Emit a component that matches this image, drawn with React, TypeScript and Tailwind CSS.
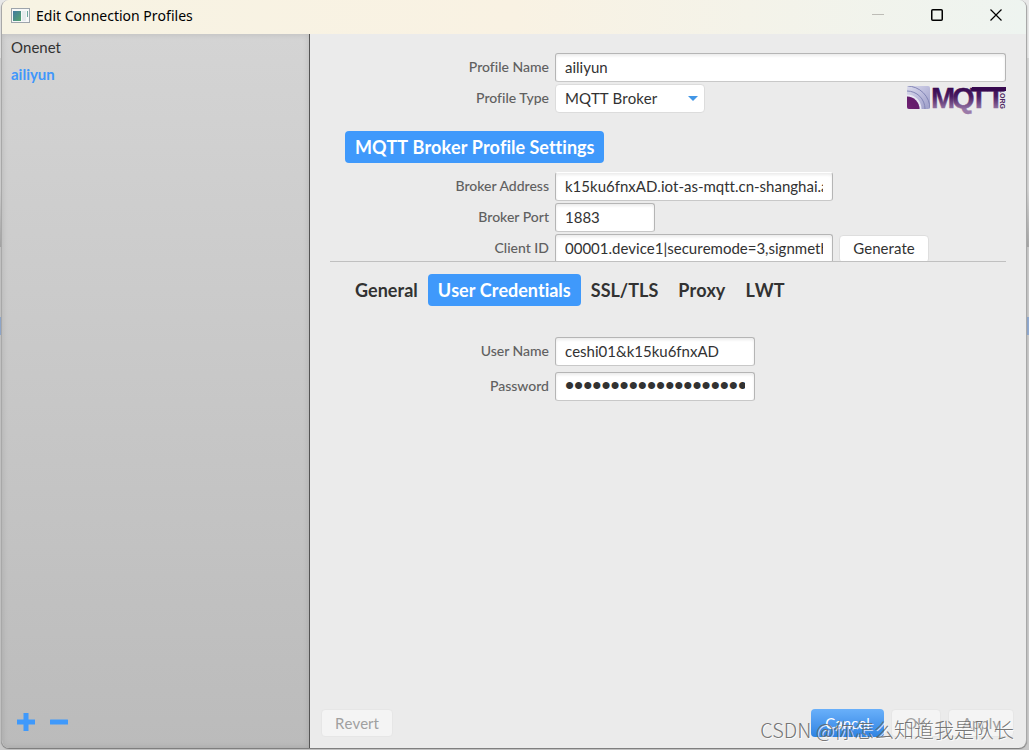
import { ReactNode } from "react"

const tabs = ["General", "User Credentials", "SSL/TLS", "Proxy", "LWT"]

const inputClass =
    "block h-[29px] rounded-[3px] border border-[#b5b5b5] border-b-[#c8c8c8] bg-white px-[9px] pb-0.5 text-[#323232] shadow-[inset_0_2px_3px_rgba(0,0,0,0.08)] outline-none"

const buttonClass = "h-7 rounded border text-[15px]"

const disabledClass = "border-[#e6e6e6] bg-[#f4f4f4] text-[#a0a0a0]"

const tabClass = "h-8 rounded px-2.5 text-[18px] font-bold"

interface FieldProps {
    id: string
    label: string
    children: ReactNode
}

function Field({ id, label, children }: Readonly<FieldProps>) {
    return (
        <div className="flex items-center gap-1.5">
            <label
                htmlFor={id}
                className="w-[219px] shrink-0 pb-0.5 text-right text-[14px] font-medium text-[#606060] [font-kerning:normal]">
                {label}
            </label>
            {children}
        </div>
    )
}

function AppIcon() {
    return (
        <svg width="19" height="15" viewBox="0 0 19 15" aria-hidden="true">
            <defs>
                <linearGradient id="pane" x1="0" y1="0" x2="1" y2="1">
                    <stop offset="0" stopColor="#4279a0" />
                    <stop offset="1" stopColor="#55a56c" />
                </linearGradient>
            </defs>
            <rect x="0.5" y="0.5" width="18" height="14" fill="#f7f8f8" stroke="#9da4ab" />
            <rect x="2" y="3" width="8" height="10" fill="url(#pane)" />
            <rect x="11" y="3" width="4" height="10" fill="#e6eaed" />
            <rect x="16" y="3" width="1" height="6" fill="#6fa8a0" />
        </svg>
    )
}

function MqttLogo() {
    return (
        <svg className="overflow-visible" width="100" height="26" viewBox="0 0 100 26" role="img" aria-label="MQTT.org">
            <defs>
                <linearGradient id="letters" gradientUnits="userSpaceOnUse" x1="0" y1="1" x2="0" y2="24">
                    <stop offset="0" stopColor="#37094f" />
                    <stop offset="0.4" stopColor="#481b61" />
                    <stop offset="1" stopColor="#9a7aa9" />
                </linearGradient>
                <linearGradient id="waves" x1="0" y1="0" x2="1" y2="1">
                    <stop offset="0" stopColor="#dcdcec" />
                    <stop offset="0.5" stopColor="#bcbcdc" />
                    <stop offset="1" stopColor="#9c9dc8" />
                </linearGradient>
                <radialGradient id="core" cx="0" cy="1" r="1">
                    <stop offset="0" stopColor="#92308a" />
                    <stop offset="1" stopColor="#661d6c" />
                </radialGradient>
                <clipPath id="badge">
                    <rect x="1" y="0" width="23" height="23" rx="2" />
                </clipPath>
            </defs>
            <g clipPath="url(#badge)">
                <rect x="1" y="0" width="23" height="23" fill="url(#waves)" />
                <circle cx="1" cy="23" r="23" fill="none" stroke="#8285b5" strokeWidth="1" />
                <circle cx="1" cy="23" r="18" fill="none" stroke="#8285b5" strokeWidth="1" />
                <circle cx="1" cy="23" r="13.5" fill="none" stroke="#e8e8f3" strokeWidth="2" />
                <circle cx="1" cy="23" r="12.5" fill="url(#core)" />
            </g>
            <text
                x="25 46 64 81"
                y="22"
                fill="url(#letters)"
                stroke="url(#letters)"
                strokeWidth="0.4"
                fontFamily="Liberation Sans, sans-serif"
                fontWeight="700"
                fontSize="29">
                MQTT
            </text>
            <rect x="66" y="1" width="34" height="4" fill="#37094f" />
            <text
                transform="translate(94 5) rotate(90)"
                fill="#4b2563"
                fontFamily="Liberation Sans, sans-serif"
                fontWeight="700"
                fontSize="7">
                .ORG
            </text>
        </svg>
    )
}

function TitleBar() {
    return (
        <header className="flex h-[34px] shrink-0 items-center bg-linear-to-r from-[#f7f3e3] via-[#f9f2e3] to-[#eef4f0] pr-6 pb-1 pl-[9px]">
            <AppIcon />
            <h1 className="ml-1.5 flex-1 font-['Noto_Sans',sans-serif] text-[14px] text-black">
                Edit Connection Profiles
            </h1>
            <div className="flex items-center gap-[47px]">
                <button type="button" aria-label="Minimize" disabled>
                    <svg width="12" height="12" viewBox="0 0 12 12">
                        <path d="M0 5.5h12" stroke="#bdbcb6" />
                    </svg>
                </button>
                <button type="button" aria-label="Maximize">
                    <svg width="12" height="12" viewBox="0 0 12 12">
                        <rect x="0.75" y="0.75" width="10.5" height="10.5" rx="1" fill="none" stroke="#000" strokeWidth="1.5" />
                    </svg>
                </button>
                <button type="button" aria-label="Close">
                    <svg width="12" height="12" viewBox="0 0 12 12">
                        <path d="M0.5 0.5l11 11M11.5 0.5l-11 11" stroke="#000" strokeWidth="1.2" />
                    </svg>
                </button>
            </div>
        </header>
    )
}

function Sidebar() {
    return (
        <aside className="flex w-[308px] shrink-0 flex-col border-r border-[#555] bg-linear-to-b from-[#d4d4d4] to-[#bbb] shadow-[inset_0_0_6px_rgba(0,0,0,0.12)]">
            <ul className="flex-1 text-[15px] leading-[27px]">
                <li>
                    <button type="button" className="w-full px-[9px] text-left text-[#323232]">
                        Onenet
                    </button>
                </li>
                <li>
                    <button type="button" className="w-full px-[9px] text-left font-bold text-[#3f97fb]">
                        ailiyun
                    </button>
                </li>
            </ul>
            <div className="flex gap-[15px] px-[15px] pb-[17px]">
                <button type="button" aria-label="Add profile">
                    <svg width="18" height="18" viewBox="0 0 18 18" fill="#3f99fb">
                        <path d="M6.5 0h5v6.5H18v5h-6.5V18h-5v-6.5H0v-5h6.5z" />
                    </svg>
                </button>
                <button type="button" aria-label="Remove profile">
                    <svg width="18" height="18" viewBox="0 0 18 18" fill="#3f99fb">
                        <rect y="6.5" width="18" height="5" rx="0.5" />
                    </svg>
                </button>
            </div>
        </aside>
    )
}

function ProfileForm() {
    return (
        <form className="flex flex-1 flex-col px-5 pt-[19px]">
            <div className="flex flex-col gap-0.5">
                <Field id="profile-name" label="Profile Name">
                    <input id="profile-name" className={`${inputClass} min-w-0 flex-1 text-[15px]`} defaultValue="ailiyun" />
                </Field>
                <div className="flex items-center justify-between">
                    <Field id="profile-type" label="Profile Type">
                        <div className="relative">
                            <select
                                id="profile-type"
                                className="block h-[29px] w-[150px] appearance-none rounded border border-[#dcdcdc] bg-white px-[9px] text-[15px] text-[#323232]">
                                <option>MQTT Broker</option>
                            </select>
                            <svg className="pointer-events-none absolute top-3 right-[7px]" width="10" height="5" viewBox="0 0 10 5">
                                <path d="M0 0h10L5 5z" fill="#4296e6" />
                            </svg>
                        </div>
                    </Field>
                    <MqttLogo />
                </div>
            </div>

            <div className="mt-[18px] px-[15px]">
                <button type="button" className={`${tabClass} bg-[#3f99fb] text-white`}>
                    MQTT Broker Profile Settings
                </button>
            </div>

            <section className="mt-[9px] flex h-[90px] flex-col gap-0.5 overflow-hidden border-b border-[#c0c0c0]">
                <Field id="broker-address" label="Broker Address">
                    <input
                        id="broker-address"
                        className={`${inputClass} w-[278px] border-t-white text-[15px]`}
                        defaultValue="k15ku6fnxAD.iot-as-mqtt.cn-shanghai.aliyuncs.com"
                    />
                </Field>
                <Field id="broker-port" label="Broker Port">
                    <input id="broker-port" className={`${inputClass} w-[100px] text-[15px]`} defaultValue="1883" />
                </Field>
                <Field id="client-id" label="Client ID">
                    <input
                        id="client-id"
                        className={`${inputClass} w-[278px] text-[15px]`}
                        defaultValue="00001.device1|securemode=3,signmethod=hmacsha1|"
                    />
                    <button type="button" className={`${buttonClass} w-[90px] border-[#dedede] bg-white text-[#323232]`}>
                        Generate
                    </button>
                </Field>
            </section>

            <nav className="mt-3 flex px-[15px]" role="tablist">
                {tabs.map(tab => (
                    <button
                        key={tab}
                        type="button"
                        role="tab"
                        aria-selected={tab === "User Credentials"}
                        className={`${tabClass} ${tab === "User Credentials" ? "bg-[#3f99fb] text-white" : "text-[#323232]"}`}>
                        {tab}
                    </button>
                ))}
            </nav>

            <section className="mt-[31px] flex flex-col gap-1.5">
                <Field id="user-name" label="User Name">
                    <input id="user-name" className={`${inputClass} w-[200px] text-[15px]`} defaultValue="ceshi01&k15ku6fnxAD" />
                </Field>
                <Field id="password" label="Password">
                    <input
                        id="password"
                        type="password"
                        className={`${inputClass} w-[200px] font-['Liberation_Sans',sans-serif] text-[26px]`}
                        defaultValue="abcdefghijklmnopqrst"
                    />
                </Field>
            </section>
        </form>
    )
}

function Footer() {
    return (
        <footer className="relative flex gap-[7px] pr-3 pb-[11px] pl-[11px]">
            <button type="button" disabled className={`${buttonClass} ${disabledClass} mr-auto w-[72px]`}>
                Revert
            </button>
            <button type="button" className="h-7 w-[73px] rounded bg-linear-to-b from-[#69b0fa] to-[#2e83e2] text-[15px] text-white">
                Cancel
            </button>
            <button type="button" disabled className={`${buttonClass} ${disabledClass} w-[50px]`}>
                OK
            </button>
            <button type="button" disabled className={`${buttonClass} ${disabledClass} w-[66px]`}>
                Apply
            </button>
            <p className="pointer-events-none absolute right-3 bottom-1 font-['Noto_Sans_CJK_SC',sans-serif] text-[20px] leading-7 font-light whitespace-nowrap text-[#666]/90 [font-kerning:normal] [text-shadow:1px_1px_0_rgba(255,255,255,0.8)]">
                CSDN @你怎么知道我是队长
            </p>
        </footer>
    )
}

export default function App() {
    return (
        <div className="flex min-h-screen bg-[linear-gradient(#e8e8e8_0_58px,#d4d4d4_58px_190px,#a6a6a6_247px,#c8c8c8_247px_317px,#8fa9d0_317px_335px,#c8c8c8_335px)] pr-0.5 pb-0.5 pl-px font-['Lato',sans-serif] [font-kerning:none] [font-variant-ligatures:none]">
            <div className="flex flex-1 flex-col overflow-hidden rounded-lg border-x border-[#a8a8a8] bg-[#ebebeb] shadow-[0_1px_1px_#777]">
                <TitleBar />
                <div className="flex flex-1">
                    <Sidebar />
                    <main className="flex min-w-0 flex-1 flex-col">
                        <ProfileForm />
                        <Footer />
                    </main>
                </div>
            </div>
        </div>
    )
}
